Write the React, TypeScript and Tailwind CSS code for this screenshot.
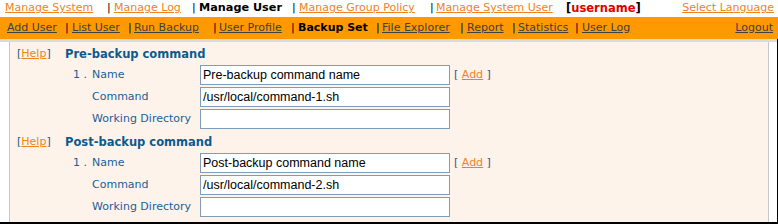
import React from "react";

const navFont = { fontFamily: '"DejaVu Sans", Verdana, sans-serif' };
const inputFont = { fontFamily: '"Liberation Sans", Arial, sans-serif' };

function Sep({ w }: { w: string }) {
  return <span className={`${w} shrink-0 text-black`}>|</span>;
}

function Field({ value }: { value: string }) {
  return (
    <input
      readOnly
      value={value}
      className="h-[20px] w-[250px] border border-[#7f9db9] bg-white px-[2px] text-[12.5px] text-black outline-none"
      style={inputFont}
    />
  );
}

function Section({ title, name, command }: { title: string; name: string; command: string }) {
  return (
    <div>
      {/* heading */}
      <div className="flex h-[20px] items-center pt-px">
        <div className="w-[55px] shrink-0 pl-[7px] text-[#1a5f98]">
          [<a className="text-[#f0821e] underline">Help</a>]
        </div>
        <div className="text-[11.5px] font-bold text-[#0f5a8a]">{title}</div>
      </div>

      {/* rows */}
      <div className="flex h-[22px] items-center">
        <div className="w-[82px] shrink-0 pr-[5px] text-right text-[#1a5f98]">1 .</div>
        <div className="w-[108px] shrink-0 text-[#1a5f98]">Name</div>
        <Field value={name} />
        <div className="ml-[4px] text-[#1a5f98]">
          [ <a className="text-[#f0821e] underline">Add</a> ]
        </div>
      </div>
      <div className="flex h-[22px] items-center">
        <div className="w-[82px] shrink-0" />
        <div className="w-[108px] shrink-0 text-[#1a5f98]">Command</div>
        <Field value={command} />
      </div>
      <div className="flex h-[22px] items-center">
        <div className="w-[82px] shrink-0" />
        <div className="w-[108px] shrink-0 text-[#1a5f98]">Working Directory</div>
        <Field value="" />
      </div>
    </div>
  );
}

export default function App() {
  return (
    <div className="h-[224px] w-[778px] overflow-hidden bg-white text-[11px]" style={navFont}>
      {/* Top menu */}
      <div className="flex h-[17px] items-center whitespace-nowrap pl-[5px] pr-[4px] text-[#f0821e]">
        <a className="w-[102px] shrink-0 underline">Manage System</a>
        <Sep w="w-[7px]" />
        <a className="w-[78px] shrink-0 underline">Manage Log</a>
        <Sep w="w-[7px]" />
        <span className="w-[93px] shrink-0 text-[11.25px] font-bold text-black">Manage User</span>
        <Sep w="w-[7px]" />
        <a className="w-[131px] shrink-0 underline">Manage Group Policy</a>
        <Sep w="w-[6px]" />
        <a className="w-[130px] shrink-0 underline">Manage System User</a>
        <span className="text-[11.5px] font-bold text-black">
          [<span className="text-[#e00000]">username</span>]
        </span>
        <a className="ml-auto underline">Select Language</a>
      </div>

      {/* Sub menu */}
      <div className="flex h-[22px] items-center whitespace-nowrap bg-[#ff9900] pl-[7px] pr-[5px] text-[#404040]">
        <a className="w-[58px] shrink-0 underline">Add User</a>
        <Sep w="w-[7px]" />
        <a className="w-[56px] shrink-0 underline">List User</a>
        <Sep w="w-[6px]" />
        <a className="w-[79px] shrink-0 underline">Run Backup</a>
        <Sep w="w-[6px]" />
        <a className="w-[72px] shrink-0 underline">User Profile</a>
        <Sep w="w-[7px]" />
        <span className="w-[78px] shrink-0 font-bold text-black">Backup Set</span>
        <Sep w="w-[6px]" />
        <a className="w-[78px] shrink-0 underline">File Explorer</a>
        <Sep w="w-[7px]" />
        <a className="w-[45px] shrink-0 underline">Report</a>
        <Sep w="w-[6px]" />
        <a className="w-[57px] shrink-0 underline">Statistics</a>
        <Sep w="w-[7px]" />
        <a className="underline">User Log</a>
        <a className="ml-auto underline">Logout</a>
      </div>

      {/* Content frame */}
      <div className="border-b-2 border-r border-black">
        <div className="h-[3px] bg-[#dadada]" />
        <div className="flex bg-white pl-[9px] pr-[8px]">
          <div className="flex flex-1 flex-col gap-[2px] border-x border-[#c8c8c8] bg-[#fdf3ea] pb-[4px] pt-[2px]">
            <Section title="Pre-backup command" name="Pre-backup command name" command="/usr/local/command-1.sh" />
            <Section title="Post-backup command" name="Post-backup command name" command="/usr/local/command-2.sh" />
          </div>
        </div>
      </div>
    </div>
  );
}
